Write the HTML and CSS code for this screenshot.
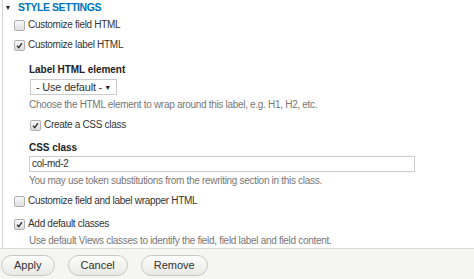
FILE: index.html
```html
<!DOCTYPE html>
<html>
<head>
<meta charset="utf-8">
<link rel="stylesheet" href="styles.css">
</head>
<body>
<div class="page">
  <div class="fieldset">
    <div class="legend"><span class="tri"></span><span class="legend-text">STYLE SETTINGS</span></div>

    <div class="cb-row r1"><span class="cb"></span><span class="cb-label">Customize field HTML</span></div>
    <div class="cb-row r2"><span class="cb checked"><svg viewBox="0 0 10 10"><path d="M2.3 5.2 L4.2 7.3 L7.8 2.4" fill="none" stroke="#333" stroke-width="1.6"/></svg></span><span class="cb-label">Customize label HTML</span></div>

    <div class="nested">
      <div class="field-label l1">Label HTML element</div>
      <div class="select"><span>- Use default -</span><span class="arrow">&#9660;</span></div>
      <div class="desc d1">Choose the HTML element to wrap around this label, e.g. H1, H2, etc.</div>
      <div class="cb-row r3"><span class="cb checked"><svg viewBox="0 0 10 10"><path d="M2.3 5.2 L4.2 7.3 L7.8 2.4" fill="none" stroke="#333" stroke-width="1.6"/></svg></span><span class="cb-label">Create a CSS class</span></div>
      <div class="field-label l2">CSS class</div>
      <div class="text-input">col-md-2</div>
      <div class="desc d2">You may use token substitutions from the rewriting section in this class.</div>
    </div>

    <div class="cb-row r4"><span class="cb"></span><span class="cb-label">Customize field and label wrapper HTML</span></div>
    <div class="cb-row r5"><span class="cb checked"><svg viewBox="0 0 10 10"><path d="M2.3 5.2 L4.2 7.3 L7.8 2.4" fill="none" stroke="#333" stroke-width="1.6"/></svg></span><span class="cb-label">Add default classes</span></div>
    <div class="desc d3">Use default Views classes to identify the field, field label and field content.</div>
  </div>

  <div class="footer">
    <span class="btn">Apply</span>
    <span class="btn">Cancel</span>
    <span class="btn">Remove</span>
  </div>
</div>
</body>
</html>
```

FILE: styles.css
```css
html, body {
  margin: 0;
  padding: 0;
  background: #fff;
}
body {
  width: 474px;
  height: 279px;
  overflow: hidden;
  font-family: "Liberation Sans", Arial, sans-serif;
  font-size: 10px;
  color: #333;
}
.page {
  display: flex;
  flex-direction: column;
  height: 279px;
}
.fieldset {
  margin-left: 2px;
  border-left: 1px solid #d4d4d4;
  height: 248px;
  box-sizing: border-box;
}
.legend {
  display: flex;
  align-items: center;
  height: 15px;
}
.tri {
  width: 0;
  height: 0;
  border-left: 2.5px solid transparent;
  border-right: 2.5px solid transparent;
  border-top: 4px solid #222;
  margin-left: 3px;
  margin-right: 8px;
  margin-top: 1px;
}
.legend-text {
  color: #0074bd;
  font-weight: bold;
  font-size: 10.5px;
  letter-spacing: -0.45px;
  line-height: 15px;
}
.cb-row {
  display: flex;
  align-items: center;
  height: 12px;
  margin-left: 11px;
}
.nested .cb-row { margin-left: 1px; }
.cb {
  width: 9px;
  height: 9px;
  border: 1px solid #b0b0b0;
  border-radius: 2px;
  background: linear-gradient(#f8f8f8, #dedede);
  margin-right: 3px;
  box-sizing: content-box;
  display: flex;
}
.cb svg { width: 9px; height: 9px; }
.cb-label {
  line-height: 12px;
  color: #333;
  letter-spacing: -0.3px;
}
.r1 { margin-top: 4px; }
.r2 { margin-top: 8px; }
.nested {
  margin-left: 26px;
}
.field-label {
  font-weight: bold;
  color: #222;
  line-height: 12px;
  letter-spacing: -0.05px;
}
.l1 { margin-top: 13px; }
.select {
  margin-top: 3px;
  margin-left: 1px;
  width: 87px;
  height: 16px;
  box-sizing: border-box;
  border: 1px solid #ccc;
  display: flex;
  align-items: center;
  justify-content: space-between;
  padding: 0 5px 0 5px;
  color: #333;
  font-size: 11px;
  letter-spacing: -0.2px;
}
.arrow { font-size: 7px; color: #222; }
.desc {
  color: #777;
  line-height: 12px;
  letter-spacing: -0.3px;
}
.d1 { margin-top: 4px; }
.r3 { margin-top: 8px; }
.l2 { margin-top: 11px; }
.text-input {
  margin-top: 2px;
  width: 386px;
  height: 16px;
  box-sizing: border-box;
  border: 1px solid #ccc;
  padding: 0 2px;
  line-height: 14px;
  color: #333;
  letter-spacing: -0.3px;
}
.d2 { margin-top: 3px; }
.r4 { margin-top: 8px; }
.r5 { margin-top: 11px; }
.d3 { margin-top: 5px; margin-left: 26px; }
.footer {
  flex: 1;
  border-top: 1px solid #dcdcd6;
  background: #f5f5f1;
  display: flex;
  align-items: flex-start;
  gap: 13px;
  padding-top: 6px;
  padding-left: 1px;
}
.btn {
  height: 21px;
  box-sizing: border-box;
  border: 1px solid #c8c8c2;
  border-radius: 11px;
  background: linear-gradient(#fdfdfc, #e8e8e4);
  padding: 0 12px;
  line-height: 19px;
  font-size: 11px;
  color: #333;
}
```
